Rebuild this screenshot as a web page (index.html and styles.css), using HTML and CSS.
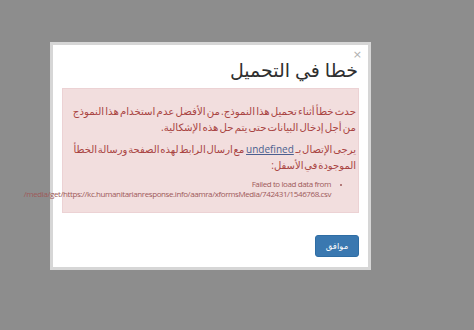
FILE: index.html
```html
<!DOCTYPE html>
<html lang="ar">
<head>
<meta charset="utf-8">
<link rel="stylesheet" href="styles.css">
</head>
<body>
<div class="modal" dir="rtl">
  <div class="modal-header">
    <span class="close">×</span>
    <h3 class="title">خطا في التحميل</h3>
  </div>
  <div class="modal-body">
    <div class="alert">
      <p class="msg">حدث خطأ أثناء تحميل هذا النموذج. من الأفضل عدم استخدام هذا النموذج من أجل إدخال البيانات حتى يتم حل هذه الإشكالية.</p>
      <p class="msg msg-tight">يرجى الإتصال بـ <a href="#" class="link">undefined</a> مع ارسال الرابط لهذه الصفحة ورسالة الخطأ الموجودة في الأسفل:</p>
      <ul class="errors">
        <li>Failed to load data from /media/get/https://kc.humanitarianresponse.info/aamra/xformsMedia/742431/1546768.csv</li>
      </ul>
    </div>
  </div>
  <div class="modal-footer">
    <button class="btn">موافق</button>
  </div>
</div>
</body>
</html>
```

FILE: styles.css
```css
html, body {
  margin: 0;
  padding: 0;
}
body {
  background: #8d8d8d;
  width: 474px;
  height: 330px;
  overflow: hidden;
  padding: 42px 0 0 50px;
  box-sizing: border-box;
  font-family: "Open Sans", "DejaVu Sans", sans-serif;
}
.modal {
  width: 321px;
  box-sizing: border-box;
  background: #fff;
  border: 3px solid #d6d6d6;
  display: flex;
  flex-direction: column;
}
.modal-header {
  padding: 4px 10px 0 10px;
  display: flex;
  flex-direction: column;
}
.close {
  align-self: flex-start;
  font-family: "DejaVu Sans", sans-serif;
  font-size: 11px;
  line-height: 11px;
  height: 11px;
  color: #b0b0b0;
  margin-right: -4px;
}
.title {
  margin: -1px 0 0 0;
  font-size: 19px;
  line-height: 22px;
  font-weight: normal;
  color: #2f2f2f;
}
.modal-body {
  padding: 7px 9px 0 9px;
}
.alert {
  background: #f2dede;
  border: 1px solid #ecd2d4;
  padding: 14px 2px 13px 5px;
  color: #a94442;
}
.msg {
  margin: 0 0 6px 0;
  font-size: 10.2px;
  line-height: 16px;
  word-spacing: -1.5px;
}
.msg-tight {
  font-size: 10px;
  word-spacing: -1.8px;
}
.link {
  color: #4b5f8f;
  text-decoration: underline;
  word-spacing: 0;
  padding: 0 1px;
}
.errors {
  margin: 6px 0 0 0;
  padding: 0 25px 0 0;
  font-size: 8px;
  line-height: 10px;
  letter-spacing: -0.4px;
  color: #9e5a5a;
}
.errors li::marker {
  font-size: 7px;
}
.modal-footer {
  display: flex;
  justify-content: flex-start;
  padding: 22px 9px 10px 9px;
}
.btn {
  width: 44px;
  height: 22px;
  border: 1px solid #2e6da4;
  border-radius: 3px;
  background: #3a78b0;
  color: #fff;
  font-family: "DejaVu Sans", sans-serif;
  font-size: 8.5px;
  padding: 0;
}
```
